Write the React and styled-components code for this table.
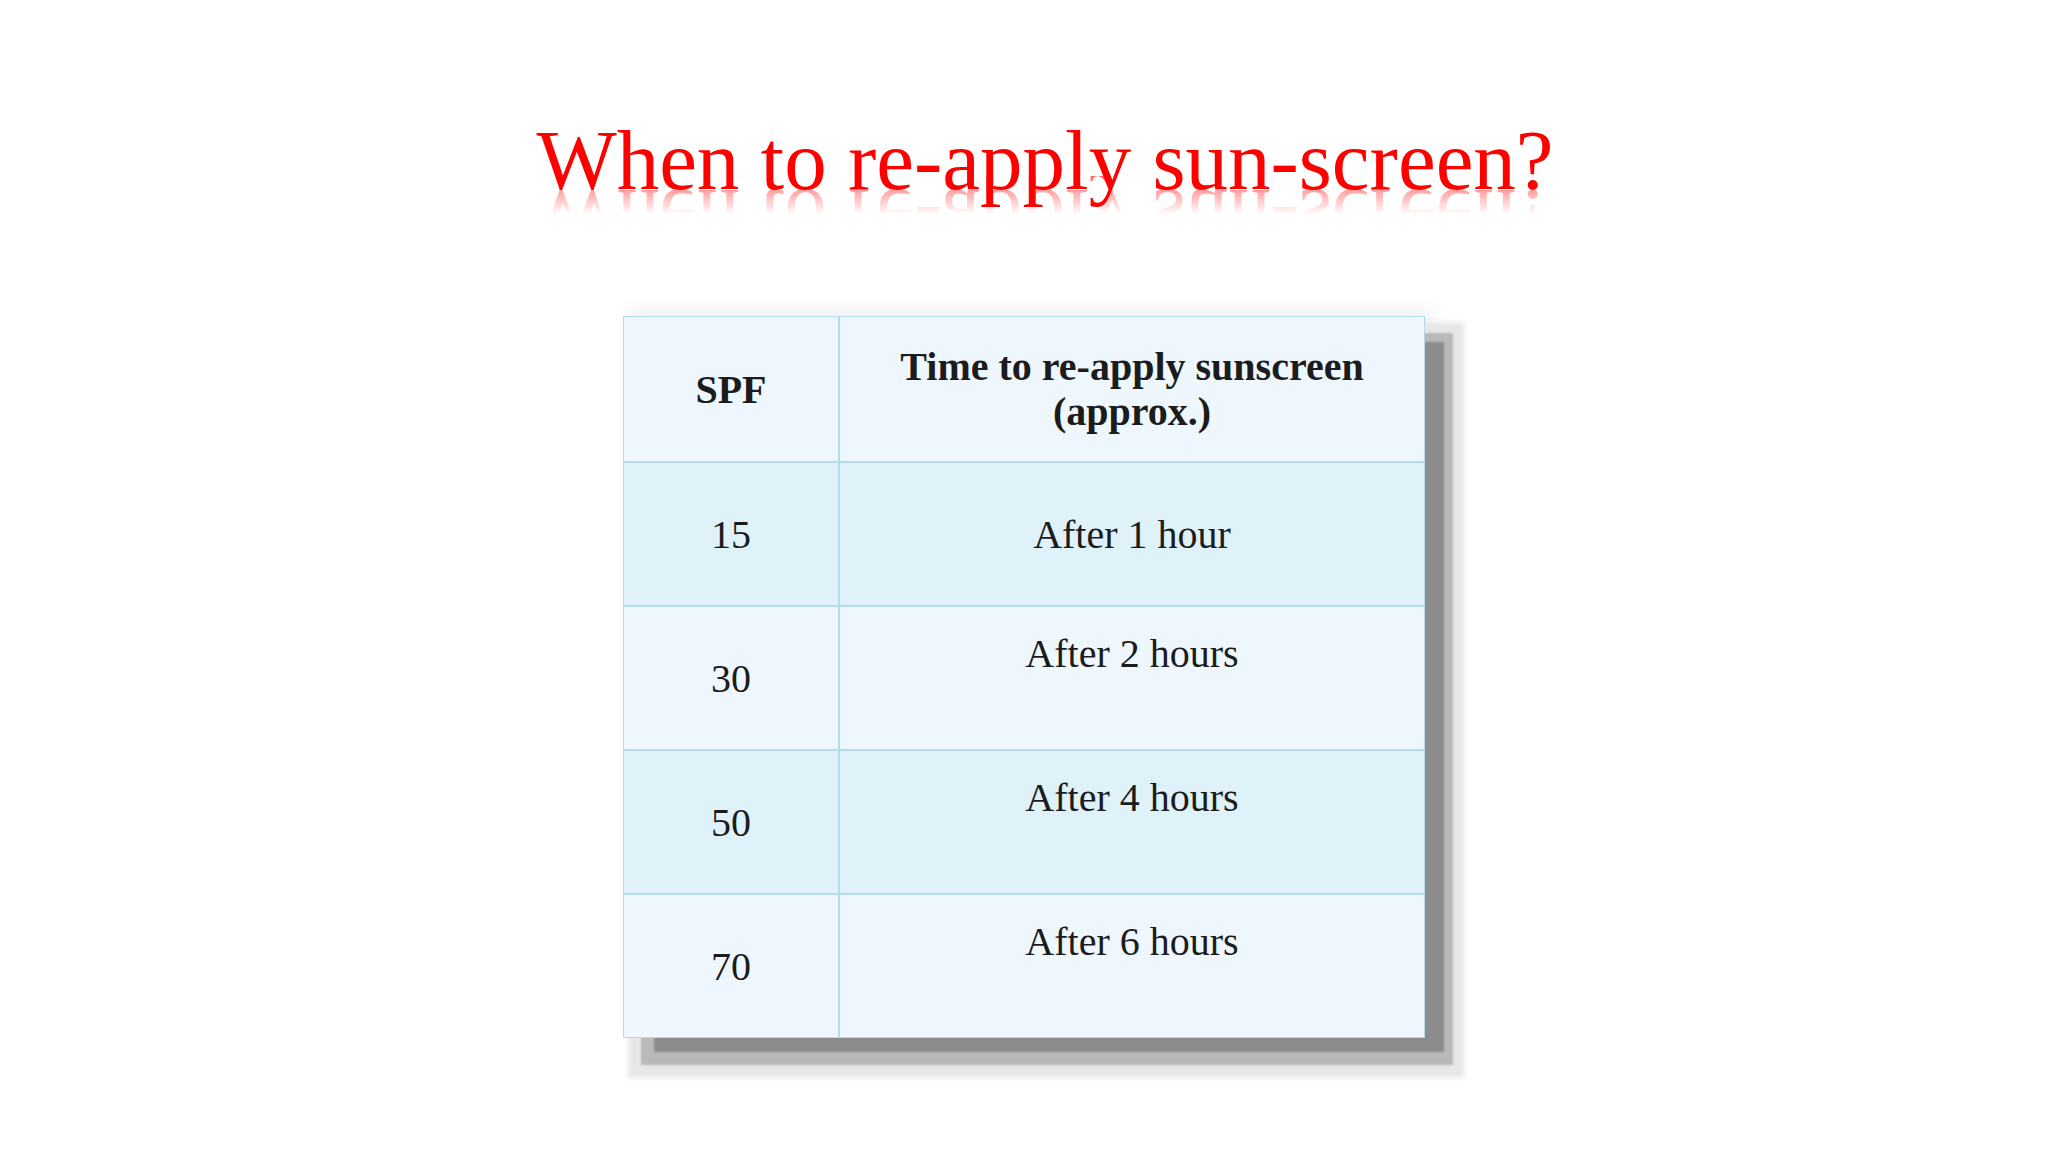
import styled, { createGlobalStyle } from 'styled-components';

// Styles globaux : pas de marge, fond blanc
const GlobalStyle = createGlobalStyle`
  html, body {
    margin: 0;
    padding: 0;
    background: #ffffff;
  }
  #root {
    min-height: 100vh;
  }
`;

const Page = styled.div`
  display: flex;
  flex-direction: column;
  align-items: center;
  padding-top: 118px;
  font-family: 'Liberation Serif', 'Times New Roman', serif;
`;

// Titre rouge avec reflet en dessous
const Title = styled.h1`
  margin: 0 0 0 42px;
  font-size: 85px;
  line-height: 1;
  font-weight: normal;
  color: #ff0000;
  white-space: nowrap;
  -webkit-box-reflect: below -27px
    linear-gradient(to bottom, transparent 55%, rgba(0, 0, 0, 0.3) 78%, rgba(0, 0, 0, 0.6) 100%);
`;

const Table = styled.div`
  margin-top: 113px;
  width: 800px;
  display: grid;
  grid-template-columns: 214px 1fr;
  border: 1px solid #b3dbea;
  box-shadow:
    25px 20px 2px -6px #8c8c8c,
    23px 22px 2px 5px #b9b9b9,
    22px 23px 5px 17px #e7e7e7,
    6px -8px 18px rgba(0, 0, 0, 0.06);
`;

const Cell = styled.div`
  height: 144px;
  box-sizing: border-box;
  display: flex;
  justify-content: center;
  align-items: ${(p) => (p.$top ? 'flex-start' : 'center')};
  padding-top: ${(p) => (p.$top ? '24px' : '0')};
  text-align: center;
  font-size: 40px;
  line-height: 45px;
  font-weight: ${(p) => (p.$bold ? 'bold' : 'normal')};
  color: #1c1c1c;
  background: ${(p) => (p.$shade ? '#dff2fa' : '#eef7fd')};
  border-left: ${(p) => (p.$second ? '2px solid #b3dbea' : 'none')};
  border-top: ${(p) => (p.$first ? 'none' : '2px solid #b3dbea')};
`;

const rows = [
  { spf: '15', time: 'After 1 hour', top: false },
  { spf: '30', time: 'After 2 hours', top: true },
  { spf: '50', time: 'After 4 hours', top: true },
  { spf: '70', time: 'After 6 hours', top: true },
];

const App = () => (
  <>
    <GlobalStyle />
    <Page>
      <Title>When to re-apply sun-screen?</Title>
      <Table>
        <Cell $bold $first>SPF</Cell>
        <Cell $bold $first $second>
          Time to re-apply sunscreen
          <br />
          (approx.)
        </Cell>
        {rows.map((row, i) => (
          <>
            <Cell key={`s${i}`} $shade={i % 2 === 0}>{row.spf}</Cell>
            <Cell key={`t${i}`} $shade={i % 2 === 0} $second $top={row.top}>
              {row.time}
            </Cell>
          </>
        ))}
      </Table>
    </Page>
  </>
);

export default App;
